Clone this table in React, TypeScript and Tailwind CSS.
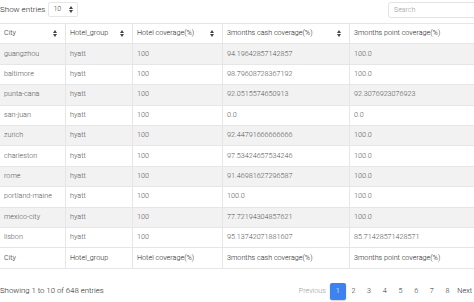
import { useState } from 'react';

interface Row {
    city: string;
    group: string;
    hotel: string;
    cash: string;
    point: string;
}

const rows: Row[] = [
    { city: 'guangzhou', group: 'hyatt', hotel: '100', cash: '94.19642857142857', point: '100.0' },
    { city: 'baltimore', group: 'hyatt', hotel: '100', cash: '98.79608728367192', point: '100.0' },
    { city: 'punta-cana', group: 'hyatt', hotel: '100', cash: '92.0515574650913', point: '92.3076923076923' },
    { city: 'san-juan', group: 'hyatt', hotel: '100', cash: '0.0', point: '0.0' },
    { city: 'zurich', group: 'hyatt', hotel: '100', cash: '92.44791666666666', point: '100.0' },
    { city: 'charleston', group: 'hyatt', hotel: '100', cash: '97.53424657534246', point: '100.0' },
    { city: 'rome', group: 'hyatt', hotel: '100', cash: '91.46981627296587', point: '100.0' },
    { city: 'portland-maine', group: 'hyatt', hotel: '100', cash: '100.0', point: '100.0' },
    { city: 'mexico-city', group: 'hyatt', hotel: '100', cash: '77.72194304857621', point: '100.0' },
    { city: 'lisbon', group: 'hyatt', hotel: '100', cash: '95.13742071881607', point: '85.71428571428571' },
];

const columns = ['City', 'Hotel_group', 'Hotel coverage(%)', '3months cash coverage(%)', '3months point coverage(%)'];

const gridCols = 'grid grid-cols-[65px_67px_90px_127px_1fr]';

// little up/down arrows drawn with css borders
function SortIcon() {
    return (
        <div className="flex flex-col items-center gap-[1px] shrink-0">
            <div className="w-0 h-0 border-l-[2px] border-r-[2px] border-b-[3px] border-l-transparent border-r-transparent border-b-[#444]" />
            <div className="w-0 h-0 border-l-[2px] border-r-[2px] border-t-[3px] border-l-transparent border-r-transparent border-t-[#444]" />
        </div>
    );
}

export default function App() {
    const [page] = useState(1);

    return (
        <div className="w-[474px] h-[302px] overflow-hidden bg-white text-[7.2px] font-['Roboto',sans-serif] font-light text-[#555]">
            <div className="w-[490px]">
                <div className="h-[23px] flex items-start justify-between">
                    <div className="flex items-center h-[17px] mt-[1px] text-[8px] text-[#222]">
                        <span>Show entries</span>
                        <div className="ml-[3px] w-[30px] h-[15px] border border-[#e6e6e6] rounded-[2px] flex items-center justify-between px-[4px] text-[7px] text-[#444]">
                            <span>10</span>
                            <SortIcon />
                        </div>
                    </div>
                    <div className="mt-[2px] w-[102px] h-[16px] border border-[#e3e3e3] rounded-[3px] flex items-center pl-[5px] text-[7px] text-[#999]">
                        Search
                    </div>
                </div>

                <div className="border-t border-[#e6e6e6]">
                    <div className={`${gridCols} h-[20.4px] border-b border-[#e6e6e6] text-[#222]`}>
                        {columns.map((c, i) => (
                            <div key={c} className={`flex items-center justify-between pl-[4px] pr-[8px] ${i > 0 ? 'border-l border-[#e6e6e6]' : ''}`}>
                                <span>{c}</span>
                                <SortIcon />
                            </div>
                        ))}
                    </div>

                    {rows.map((r, idx) => (
                        <div
                            key={r.city}
                            className={`${gridCols} h-[20.4px] border-b border-[#e6e6e6] ${idx % 2 === 0 ? 'bg-[#f2f2f2]' : 'bg-white'}`}
                        >
                            {[r.city, r.group, r.hotel, r.cash, r.point].map((v, i) => (
                                <div key={i} className={`flex items-center pl-[4px] ${i > 0 ? 'border-l border-[#e6e6e6]' : ''}`}>
                                    {v}
                                </div>
                            ))}
                        </div>
                    ))}

                    <div className={`${gridCols} h-[20.4px] border-b border-[#e6e6e6] text-[#222]`}>
                        {columns.map((c, i) => (
                            <div key={c} className={`flex items-center pl-[4px] ${i > 0 ? 'border-l border-[#e6e6e6]' : ''}`}>
                                {c}
                            </div>
                        ))}
                    </div>
                </div>

                <div className="w-[474px] mt-[14px] flex items-center justify-between text-[7.2px]">
                    <span className="text-[#222] text-[7.8px]">Showing 1 to 10 of 648 entries</span>
                    <div className="flex items-center pr-[2px]">
                        <span className="text-[#999] mr-[4px]">Previous</span>
                        {[1, 2, 3, 4, 5, 6, 7, 8].map(n => (
                            <span
                                key={n}
                                className={`w-[15.7px] h-[17px] flex items-center justify-center ${n === page ? 'bg-[#3d82f0] text-white rounded-[2px] shadow-[0_1px_2px_rgba(0,0,0,0.2)]' : 'text-[#333]'}`}
                            >
                                {n}
                            </span>
                        ))}
                        <span className="text-[#222] ml-[2px]">Next</span>
                    </div>
                </div>
            </div>
        </div>
    );
}
